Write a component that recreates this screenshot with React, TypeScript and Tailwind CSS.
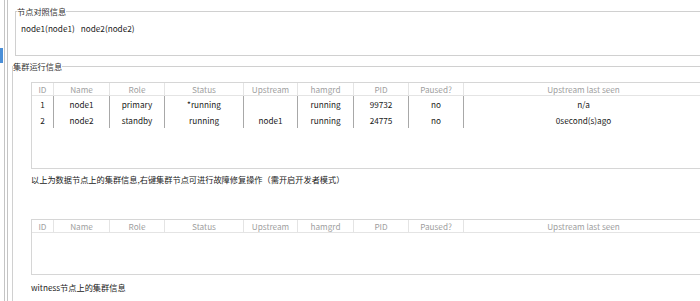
import React from 'react';

const cols = ['ID', 'Name', 'Role', 'Status', 'Upstream', 'hamgrd', 'PID', 'Paused?', 'Upstream last seen'];
const grid = 'grid grid-cols-[21px_56px_55px_79px_54px_56px_55px_55px_240px]';

const rows = [
  ['1', 'node1', 'primary', '*running', '', 'running', '99732', 'no', 'n/a'],
  ['2', 'node2', 'standby', 'running', 'node1', 'running', '24775', 'no', '0second(s)ago'],
];

const ClusterTable = ({ data, height }: { data: string[][]; height: string }) => (
  <div className={`w-[672px] border border-[#d6d6d6] bg-white ${height}`}>
    <div className={`${grid} h-[13px] border-b border-[#e4e4e4] text-[#a0a0a0]`}>
      {cols.map((c, i) => (
        <div
          key={c}
          className={`flex items-center justify-center leading-none ${i > 0 ? 'border-l border-[#e4e4e4]' : ''}`}
        >
          {c}
        </div>
      ))}
    </div>
    {data.map((r) => (
      <div key={r[0]} className={`${grid} h-[16px] text-[#1a1a1a]`}>
        {r.map((v, i) => (
          <div
            key={i}
            className={`flex items-center justify-center leading-none ${i > 0 ? 'border-l border-[#a8a8a8]' : ''}`}
          >
            {v}
          </div>
        ))}
      </div>
    ))}
  </div>
);

export default function App() {
  return (
    <div
      className="w-[700px] h-[301px] overflow-hidden bg-white flex text-[8.2px]"
      style={{ fontFamily: '"Noto Sans CJK SC", "Noto Sans", sans-serif' }}
    >
      {/* left splitter strip */}
      <div className="w-[4px] shrink-0">
        <div className="mt-[48px] h-[15px] w-[3px] bg-[#4a8fd8]" />
      </div>
      <div className="w-[3px] shrink-0 border-l border-[#c4c4c4]" />
      <div className="w-[5px] shrink-0 border-l border-[#c4c4c4]" />

      <div className="w-[692px] shrink-0 flex flex-col">
        <fieldset className="ml-[3px] mt-[6px] h-[50px] border border-[#d0d0d0] p-0 m-0 min-w-0">
          <legend className="ml-[1px] px-0 leading-[11px] text-[#333]">节点对照信息</legend>
          <div className="ml-[5px] mt-[5px] flex gap-[6px] text-[#222]">
            <span>node1(node1)</span>
            <span>node2(node2)</span>
          </div>
        </fieldset>

        <fieldset className="mt-[5px] flex-1 border border-[#d0d0d0] border-b-0 p-0 m-0 min-w-0">
          <legend className="ml-[0px] px-0 leading-[11px] text-[#333]">集群运行信息</legend>
          <div className="ml-[18px] mt-[10px] flex flex-col">
            <ClusterTable data={rows} height="h-[87px]" />
            <div className="mt-[4px] h-[13px] leading-[13px] text-[#222]">
              以上为数据节点上的集群信息,右键集群节点可进行故障修复操作（需开启开发者模式）
            </div>
            <div className="mt-[33px]">
              <ClusterTable data={[]} height="h-[56px]" />
            </div>
            <div className="mt-[6px] leading-[13px] text-[#222]">witness节点上的集群信息</div>
          </div>
        </fieldset>
      </div>
    </div>
  );
}
